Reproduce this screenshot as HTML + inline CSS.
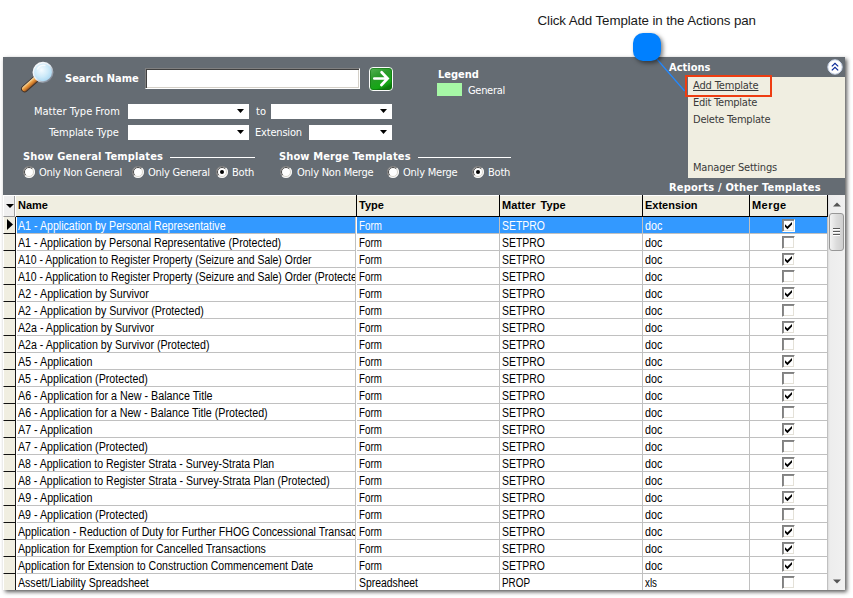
<!DOCTYPE html>
<html><head><meta charset="utf-8"><title>Templates</title>
<style>
html,body{margin:0;padding:0;background:#fff;}
body{width:853px;height:598px;position:relative;overflow:hidden;font-family:"DejaVu Sans Condensed","DejaVu Sans","Liberation Sans",sans-serif;font-size:11px;}
.abs,.abs *{position:absolute;}
#cap{position:absolute;left:537.5px;top:13px;font:13.33px/16px "Liberation Sans",sans-serif;color:#1a1a1a;white-space:nowrap;letter-spacing:-0.1px;}
#win{position:absolute;left:3px;top:57px;width:842px;height:533px;background:#656c73;box-shadow:2px 2px 4px rgba(0,0,0,.65);}
#blue{position:absolute;left:633px;top:33px;width:28px;height:28px;border-radius:10px;background:#0080ff;box-shadow:2px 2px 4px rgba(0,0,0,.5);}
.t{position:absolute;white-space:nowrap;color:#fff;line-height:13px;}
.b{font-weight:bold;}
.inp{position:absolute;background:#fff;}
.cmb{position:absolute;background:#fff;height:15px;}
.cmb:after{content:"";position:absolute;right:5px;top:5px;width:7px;height:4px;background:#000;clip-path:polygon(0 0,100% 0,50% 100%);}
.rad{position:absolute;width:12px;height:12px;}
.ln{position:absolute;height:1px;background:#fff;}
#act{position:absolute;left:685px;top:20px;width:157px;height:101px;background:#f0eee1;}
#act .t{color:#3a3a3a;}
#red{position:absolute;left:682px;top:18px;width:83px;height:18px;border:2px solid #ee3d12;}
#grid{position:absolute;left:0;top:138px;width:842px;height:395px;background:#fff;overflow:hidden;font:12px "Liberation Sans",sans-serif;}
#hdr{position:absolute;left:0;top:0;width:825px;height:21px;background:#f0eee1;border-bottom:1px solid #000;box-shadow:inset 0 1px 0 #fff;}
#hdr span{position:absolute;top:0;height:21px;line-height:20px;font-size:11px;font-weight:bold;color:#000;border-right:1px solid #000;box-sizing:border-box;padding-left:2px;}
.r{position:absolute;left:0;width:825px;height:17px;}
.r .ind{position:absolute;left:0;top:0;width:11px;height:16px;background:#f0eee1;border-left:1px solid #fff;border-right:1px solid #1a1a1a;border-bottom:1px solid #111;}
.r .c{position:absolute;top:0;height:16px;line-height:18px;border-right:1px solid #c0c0c0;border-bottom:1px solid #c0c0c0;overflow:hidden;white-space:nowrap;color:#000;padding-left:2px;box-sizing:content-box;}
.c .x{display:inline-block;transform-origin:0 50%;white-space:nowrap;}
.c1{left:14px;width:337px;padding-left:1px !important;}
.c2{left:354px;width:140px;}
.c3{left:497px;width:140px;}
.c4{left:640px;width:104px;}
.c5{left:747px;width:75px;}
.r.sel .c{background:#3399ff;color:#fff;}
.cb{position:absolute;left:32px;top:2px;width:11px;height:11px;background:#fff;border:1px solid;border-color:#808080 #fff #fff #808080;box-shadow:inset 1px 1px 0 #8a8a8a,inset -1px -1px 0 #e4e1d8;}
.cb svg{position:absolute;left:1px;top:1px;}
.cur{position:absolute;left:3px;top:2px;}
#sb{position:absolute;left:825px;top:0;width:17px;height:395px;background:linear-gradient(90deg,#dcdcdc 0,#ededed 2px,#f1f1f1);}
#thumb{position:absolute;left:1px;top:18px;width:15px;height:38px;border:1px solid #979797;border-radius:3px;background:linear-gradient(90deg,#f3f3f3,#dcdcdc 50%,#cfcfcf);box-sizing:border-box;}
</style></head><body>
<div id="cap">Click Add Template in the Actions pan</div>
<div id="win">
 <svg style="position:absolute;left:16px;top:2px" width="40" height="40" viewBox="0 0 40 40">
  <defs><radialGradient id="lg" cx="42%" cy="38%" r="65%"><stop offset="0" stop-color="#f4fbff"/><stop offset=".55" stop-color="#cdeaf9"/><stop offset="1" stop-color="#a6d6f2"/></radialGradient>
  <linearGradient id="hg" gradientUnits="userSpaceOnUse" x1="9.6" y1="22.7" x2="13.2" y2="26.9"><stop offset="0" stop-color="#f5e1b5"/><stop offset=".35" stop-color="#eea245"/><stop offset=".7" stop-color="#cf7a2a"/><stop offset="1" stop-color="#7c4a26"/></linearGradient>
  <linearGradient id="rg" x1="0" y1="0" x2="1" y2="1"><stop offset="0" stop-color="#ffffff"/><stop offset=".5" stop-color="#e4edf5"/><stop offset="1" stop-color="#5b6272"/></linearGradient></defs>
  <path d="M17.5 19.3 L5.6 29.8" stroke="#3d2f26" stroke-width="7" stroke-linecap="round"/>
  <path d="M17.5 19.3 L5.7 29.7" stroke="url(#hg)" stroke-width="5.4" stroke-linecap="round"/>
  <circle cx="24" cy="13.3" r="9.7" fill="url(#lg)" stroke="url(#rg)" stroke-width="1.6"/>
  <path d="M18.3 10.5 A7 7 0 0 1 26.5 6.6" stroke="#fff" stroke-width="1.6" fill="none" opacity=".75"/>
 </svg>
 <div class="t b" style="left:62px;top:15px;font-size:11px">Search Name</div>
 <div class="inp" style="left:142px;top:11px;width:213px;height:19px;border:1px solid;border-color:#808080 #fff #fff #808080;box-shadow:inset 1px 1px 0 #404040,inset -1px -1px 0 #d4d0c8"></div>
 <svg style="position:absolute;left:366px;top:10px" width="24" height="24" viewBox="0 0 24 24">
  <defs><linearGradient id="gg" x1="0" y1="0" x2="0.5" y2="1"><stop offset="0" stop-color="#58b558"/><stop offset=".45" stop-color="#2a9a2a"/><stop offset=".85" stop-color="#14a814"/><stop offset="1" stop-color="#0a7a0a"/></linearGradient></defs>
  <rect x=".5" y=".5" width="23" height="23" rx="3.5" fill="url(#gg)" stroke="#fbfbfb"/>
  <rect x="1.5" y="1.5" width="21" height="21" rx="2.5" fill="none" stroke="#0b6b0b" stroke-opacity=".55"/>
  <path d="M5.3 11.5 H17.6 M12.6 5.2 L18.6 11.5 L12.4 18" fill="none" stroke="#fff" stroke-width="2.7" stroke-linecap="round" stroke-linejoin="miter"/>
 </svg>
 <div class="t" style="left:31px;top:48px">Matter Type From</div>
 <div class="cmb" style="left:125px;top:47px;width:121px"></div>
 <div class="t" style="left:253px;top:48px">to</div>
 <div class="cmb" style="left:268px;top:47px;width:121px"></div>
 <div class="t" style="left:46px;top:69px;letter-spacing:-0.07px">Template Type</div>
 <div class="cmb" style="left:125px;top:68px;width:121px"></div>
 <div class="t" style="left:252px;top:69px;letter-spacing:-0.19px">Extension</div>
 <div class="cmb" style="left:306px;top:68px;width:83px"></div>

 <div class="t b" style="left:435px;top:11px">Legend</div>
 <div style="position:absolute;left:434px;top:26px;width:25px;height:13px;background:#a6f7a6"></div>
 <div class="t" style="left:465px;top:27px;letter-spacing:-0.31px">General</div>

 <div class="t b" style="left:20px;top:93px;letter-spacing:0.12px">Show General Templates</div>
 <div class="ln" style="left:167px;top:100px;width:85px"></div>
 <svg class="rad" style="left:20px;top:109px" width="12" height="12" viewBox="0 0 12 12"><circle cx="6" cy="6" r="5.6" fill="#fff"/><path d="M2.1 9.9 A5.5 5.5 0 0 1 9.9 2.1" fill="none" stroke="#808080" stroke-width="1.1"/><path d="M9.9 2.1 A5.5 5.5 0 0 1 2.1 9.9" fill="none" stroke="#f4f4f4" stroke-width="1.1"/><path d="M2.8 9.2 A4.5 4.5 0 0 1 9.2 2.8" fill="none" stroke="#4c4c4c" stroke-width="1"/><path d="M9.2 2.8 A4.5 4.5 0 0 1 2.8 9.2" fill="none" stroke="#d8d5cc" stroke-width="1"/></svg><div class="t" style="left:36px;top:109px;letter-spacing:-0.29px">Only Non General</div>
 <svg class="rad" style="left:129px;top:109px" width="12" height="12" viewBox="0 0 12 12"><circle cx="6" cy="6" r="5.6" fill="#fff"/><path d="M2.1 9.9 A5.5 5.5 0 0 1 9.9 2.1" fill="none" stroke="#808080" stroke-width="1.1"/><path d="M9.9 2.1 A5.5 5.5 0 0 1 2.1 9.9" fill="none" stroke="#f4f4f4" stroke-width="1.1"/><path d="M2.8 9.2 A4.5 4.5 0 0 1 9.2 2.8" fill="none" stroke="#4c4c4c" stroke-width="1"/><path d="M9.2 2.8 A4.5 4.5 0 0 1 2.8 9.2" fill="none" stroke="#d8d5cc" stroke-width="1"/></svg><div class="t" style="left:145px;top:109px;letter-spacing:-0.26px">Only General</div>
 <svg class="rad" style="left:213px;top:109px" width="12" height="12" viewBox="0 0 12 12"><circle cx="6" cy="6" r="5.6" fill="#fff"/><path d="M2.1 9.9 A5.5 5.5 0 0 1 9.9 2.1" fill="none" stroke="#808080" stroke-width="1.1"/><path d="M9.9 2.1 A5.5 5.5 0 0 1 2.1 9.9" fill="none" stroke="#f4f4f4" stroke-width="1.1"/><path d="M2.8 9.2 A4.5 4.5 0 0 1 9.2 2.8" fill="none" stroke="#4c4c4c" stroke-width="1"/><path d="M9.2 2.8 A4.5 4.5 0 0 1 2.8 9.2" fill="none" stroke="#d8d5cc" stroke-width="1"/><circle cx="6" cy="6" r="2" fill="#000"/></svg><div class="t" style="left:229px;top:109px;letter-spacing:-0.22px">Both</div>

 <div class="t b" style="left:276px;top:93px;letter-spacing:0.13px">Show Merge Templates</div>
 <div class="ln" style="left:415px;top:100px;width:93px"></div>
 <svg class="rad" style="left:277px;top:109px" width="12" height="12" viewBox="0 0 12 12"><circle cx="6" cy="6" r="5.6" fill="#fff"/><path d="M2.1 9.9 A5.5 5.5 0 0 1 9.9 2.1" fill="none" stroke="#808080" stroke-width="1.1"/><path d="M9.9 2.1 A5.5 5.5 0 0 1 2.1 9.9" fill="none" stroke="#f4f4f4" stroke-width="1.1"/><path d="M2.8 9.2 A4.5 4.5 0 0 1 9.2 2.8" fill="none" stroke="#4c4c4c" stroke-width="1"/><path d="M9.2 2.8 A4.5 4.5 0 0 1 2.8 9.2" fill="none" stroke="#d8d5cc" stroke-width="1"/></svg><div class="t" style="left:294px;top:109px;letter-spacing:-0.225px">Only Non Merge</div>
 <svg class="rad" style="left:384px;top:109px" width="12" height="12" viewBox="0 0 12 12"><circle cx="6" cy="6" r="5.6" fill="#fff"/><path d="M2.1 9.9 A5.5 5.5 0 0 1 9.9 2.1" fill="none" stroke="#808080" stroke-width="1.1"/><path d="M9.9 2.1 A5.5 5.5 0 0 1 2.1 9.9" fill="none" stroke="#f4f4f4" stroke-width="1.1"/><path d="M2.8 9.2 A4.5 4.5 0 0 1 9.2 2.8" fill="none" stroke="#4c4c4c" stroke-width="1"/><path d="M9.2 2.8 A4.5 4.5 0 0 1 2.8 9.2" fill="none" stroke="#d8d5cc" stroke-width="1"/></svg><div class="t" style="left:400px;top:109px;letter-spacing:-0.22px">Only Merge</div>
 <svg class="rad" style="left:469px;top:109px" width="12" height="12" viewBox="0 0 12 12"><circle cx="6" cy="6" r="5.6" fill="#fff"/><path d="M2.1 9.9 A5.5 5.5 0 0 1 9.9 2.1" fill="none" stroke="#808080" stroke-width="1.1"/><path d="M9.9 2.1 A5.5 5.5 0 0 1 2.1 9.9" fill="none" stroke="#f4f4f4" stroke-width="1.1"/><path d="M2.8 9.2 A4.5 4.5 0 0 1 9.2 2.8" fill="none" stroke="#4c4c4c" stroke-width="1"/><path d="M9.2 2.8 A4.5 4.5 0 0 1 2.8 9.2" fill="none" stroke="#d8d5cc" stroke-width="1"/><circle cx="6" cy="6" r="2" fill="#000"/></svg><div class="t" style="left:485px;top:109px;letter-spacing:-0.22px">Both</div>

 <div class="t b" style="left:666px;top:4px">Actions</div>
 <svg style="position:absolute;left:824px;top:2px" width="16" height="16" viewBox="0 0 16 16"><circle cx="8" cy="8" r="7.2" fill="#fff" stroke="#c8d4ea" stroke-width="1"/><path d="M4.8 7.4 L8 4.3 L11.2 7.4 M4.8 11.4 L8 8.3 L11.2 11.4" fill="none" stroke="#0a2a9a" stroke-width="1.25"/></svg>
 <div id="act">
  <div class="t" style="left:5px;top:2px;text-decoration:underline;letter-spacing:-0.15px">Add Template</div>
  <div class="t" style="left:5px;top:19px;letter-spacing:-0.24px">Edit Template</div>
  <div class="t" style="left:5px;top:36px;letter-spacing:-0.22px">Delete Template</div>
  <div class="t" style="left:5px;top:84px;letter-spacing:-0.2px">Manager Settings</div>
 </div>
 <div id="red"></div>
 <div class="t b" style="left:666px;top:124px;letter-spacing:0.22px">Reports / Other Templates</div>

 <div id="grid">
  <div id="hdr">
   <span style="left:0;width:13px;height:22px;background:#efefef;border:1px solid;border-color:#fff #fff #9a9a9a #fff;box-shadow:inset -1px 0 0 #a0a0a0;padding:0;z-index:2"><svg style="position:absolute;left:2px;top:8px" width="8" height="4" viewBox="0 0 8 4"><path d="M0 0 H8 L4 4 Z" fill="#000"/></svg></span>
   <span style="left:13px;width:341px">Name</span>
   <span style="left:354px;width:143px">Type</span>
   <span style="left:497px;width:143px;word-spacing:1.6px;letter-spacing:.12px">Matter Type</span>
   <span style="left:640px;width:107px">Extension</span>
   <span style="left:747px;width:78px;letter-spacing:.44px">Merge</span>
  </div>
<div class="r sel" style="top:22px"><i class="ind"><svg class="cur" width="6" height="11" viewBox="0 0 6 11"><path d="M0 0 L6 5.5 L0 11 Z" fill="#000"/></svg></i><span class="c c1"><span class="x" style="transform:scaleX(0.8866)">A1 - Application by Personal Representative</span></span><span class="c c2"><span class="x" style="transform:scaleX(0.8143)">Form</span></span><span class="c c3"><span class="x" style="transform:scaleX(0.8674)">SETPRO</span></span><span class="c c4"><span class="x" style="transform:scaleX(0.8988)">doc</span></span><span class="c c5"><b class="cb"><svg width="9" height="9" viewBox="0 0 9 9"><path d="M1 3.2 L3.4 5.6 L8 1 L8 3.6 L3.4 8.2 L1 5.8 Z" fill="#000"/></svg></b></span></div>
<div class="r" style="top:39px"><i class="ind"></i><span class="c c1"><span class="x" style="transform:scaleX(0.8864)">A1 - Application by Personal Representative (Protected)</span></span><span class="c c2"><span class="x" style="transform:scaleX(0.8143)">Form</span></span><span class="c c3"><span class="x" style="transform:scaleX(0.8674)">SETPRO</span></span><span class="c c4"><span class="x" style="transform:scaleX(0.8988)">doc</span></span><span class="c c5"><b class="cb"></b></span></div>
<div class="r" style="top:56px"><i class="ind"></i><span class="c c1"><span class="x" style="transform:scaleX(0.8713)">A10 - Application to Register Property (Seizure and Sale) Order</span></span><span class="c c2"><span class="x" style="transform:scaleX(0.8143)">Form</span></span><span class="c c3"><span class="x" style="transform:scaleX(0.8674)">SETPRO</span></span><span class="c c4"><span class="x" style="transform:scaleX(0.8988)">doc</span></span><span class="c c5"><b class="cb"><svg width="9" height="9" viewBox="0 0 9 9"><path d="M1 3.2 L3.4 5.6 L8 1 L8 3.6 L3.4 8.2 L1 5.8 Z" fill="#000"/></svg></b></span></div>
<div class="r" style="top:73px"><i class="ind"></i><span class="c c1"><span class="x" style="transform:scaleX(0.8713)">A10 - Application to Register Property (Seizure and Sale) Order (Protected)</span></span><span class="c c2"><span class="x" style="transform:scaleX(0.8143)">Form</span></span><span class="c c3"><span class="x" style="transform:scaleX(0.8674)">SETPRO</span></span><span class="c c4"><span class="x" style="transform:scaleX(0.8988)">doc</span></span><span class="c c5"><b class="cb"></b></span></div>
<div class="r" style="top:90px"><i class="ind"></i><span class="c c1"><span class="x" style="transform:scaleX(0.8913)">A2 - Application by Survivor</span></span><span class="c c2"><span class="x" style="transform:scaleX(0.8143)">Form</span></span><span class="c c3"><span class="x" style="transform:scaleX(0.8674)">SETPRO</span></span><span class="c c4"><span class="x" style="transform:scaleX(0.8988)">doc</span></span><span class="c c5"><b class="cb"><svg width="9" height="9" viewBox="0 0 9 9"><path d="M1 3.2 L3.4 5.6 L8 1 L8 3.6 L3.4 8.2 L1 5.8 Z" fill="#000"/></svg></b></span></div>
<div class="r" style="top:107px"><i class="ind"></i><span class="c c1"><span class="x" style="transform:scaleX(0.8876)">A2 - Application by Survivor (Protected)</span></span><span class="c c2"><span class="x" style="transform:scaleX(0.8143)">Form</span></span><span class="c c3"><span class="x" style="transform:scaleX(0.8674)">SETPRO</span></span><span class="c c4"><span class="x" style="transform:scaleX(0.8988)">doc</span></span><span class="c c5"><b class="cb"></b></span></div>
<div class="r" style="top:124px"><i class="ind"></i><span class="c c1"><span class="x" style="transform:scaleX(0.8864)">A2a - Application by Survivor</span></span><span class="c c2"><span class="x" style="transform:scaleX(0.8143)">Form</span></span><span class="c c3"><span class="x" style="transform:scaleX(0.8674)">SETPRO</span></span><span class="c c4"><span class="x" style="transform:scaleX(0.8988)">doc</span></span><span class="c c5"><b class="cb"><svg width="9" height="9" viewBox="0 0 9 9"><path d="M1 3.2 L3.4 5.6 L8 1 L8 3.6 L3.4 8.2 L1 5.8 Z" fill="#000"/></svg></b></span></div>
<div class="r" style="top:141px"><i class="ind"></i><span class="c c1"><span class="x" style="transform:scaleX(0.8861)">A2a - Application by Survivor (Protected)</span></span><span class="c c2"><span class="x" style="transform:scaleX(0.8143)">Form</span></span><span class="c c3"><span class="x" style="transform:scaleX(0.8674)">SETPRO</span></span><span class="c c4"><span class="x" style="transform:scaleX(0.8988)">doc</span></span><span class="c c5"><b class="cb"></b></span></div>
<div class="r" style="top:158px"><i class="ind"></i><span class="c c1"><span class="x" style="transform:scaleX(0.8922)">A5 - Application</span></span><span class="c c2"><span class="x" style="transform:scaleX(0.8143)">Form</span></span><span class="c c3"><span class="x" style="transform:scaleX(0.8674)">SETPRO</span></span><span class="c c4"><span class="x" style="transform:scaleX(0.8988)">doc</span></span><span class="c c5"><b class="cb"><svg width="9" height="9" viewBox="0 0 9 9"><path d="M1 3.2 L3.4 5.6 L8 1 L8 3.6 L3.4 8.2 L1 5.8 Z" fill="#000"/></svg></b></span></div>
<div class="r" style="top:175px"><i class="ind"></i><span class="c c1"><span class="x" style="transform:scaleX(0.8893)">A5 - Application (Protected)</span></span><span class="c c2"><span class="x" style="transform:scaleX(0.8143)">Form</span></span><span class="c c3"><span class="x" style="transform:scaleX(0.8674)">SETPRO</span></span><span class="c c4"><span class="x" style="transform:scaleX(0.8988)">doc</span></span><span class="c c5"><b class="cb"></b></span></div>
<div class="r" style="top:192px"><i class="ind"></i><span class="c c1"><span class="x" style="transform:scaleX(0.8949)">A6 - Application for a New - Balance Title</span></span><span class="c c2"><span class="x" style="transform:scaleX(0.8143)">Form</span></span><span class="c c3"><span class="x" style="transform:scaleX(0.8674)">SETPRO</span></span><span class="c c4"><span class="x" style="transform:scaleX(0.8988)">doc</span></span><span class="c c5"><b class="cb"><svg width="9" height="9" viewBox="0 0 9 9"><path d="M1 3.2 L3.4 5.6 L8 1 L8 3.6 L3.4 8.2 L1 5.8 Z" fill="#000"/></svg></b></span></div>
<div class="r" style="top:209px"><i class="ind"></i><span class="c c1"><span class="x" style="transform:scaleX(0.8913)">A6 - Application for a New - Balance Title (Protected)</span></span><span class="c c2"><span class="x" style="transform:scaleX(0.8143)">Form</span></span><span class="c c3"><span class="x" style="transform:scaleX(0.8674)">SETPRO</span></span><span class="c c4"><span class="x" style="transform:scaleX(0.8988)">doc</span></span><span class="c c5"><b class="cb"></b></span></div>
<div class="r" style="top:226px"><i class="ind"></i><span class="c c1"><span class="x" style="transform:scaleX(0.8922)">A7 - Application</span></span><span class="c c2"><span class="x" style="transform:scaleX(0.8143)">Form</span></span><span class="c c3"><span class="x" style="transform:scaleX(0.8674)">SETPRO</span></span><span class="c c4"><span class="x" style="transform:scaleX(0.8988)">doc</span></span><span class="c c5"><b class="cb"><svg width="9" height="9" viewBox="0 0 9 9"><path d="M1 3.2 L3.4 5.6 L8 1 L8 3.6 L3.4 8.2 L1 5.8 Z" fill="#000"/></svg></b></span></div>
<div class="r" style="top:243px"><i class="ind"></i><span class="c c1"><span class="x" style="transform:scaleX(0.8893)">A7 - Application (Protected)</span></span><span class="c c2"><span class="x" style="transform:scaleX(0.8143)">Form</span></span><span class="c c3"><span class="x" style="transform:scaleX(0.8674)">SETPRO</span></span><span class="c c4"><span class="x" style="transform:scaleX(0.8988)">doc</span></span><span class="c c5"><b class="cb"></b></span></div>
<div class="r" style="top:260px"><i class="ind"></i><span class="c c1"><span class="x" style="transform:scaleX(0.8790)">A8 - Application to Register Strata - Survey-Strata Plan</span></span><span class="c c2"><span class="x" style="transform:scaleX(0.8143)">Form</span></span><span class="c c3"><span class="x" style="transform:scaleX(0.8674)">SETPRO</span></span><span class="c c4"><span class="x" style="transform:scaleX(0.8988)">doc</span></span><span class="c c5"><b class="cb"><svg width="9" height="9" viewBox="0 0 9 9"><path d="M1 3.2 L3.4 5.6 L8 1 L8 3.6 L3.4 8.2 L1 5.8 Z" fill="#000"/></svg></b></span></div>
<div class="r" style="top:277px"><i class="ind"></i><span class="c c1"><span class="x" style="transform:scaleX(0.8801)">A8 - Application to Register Strata - Survey-Strata Plan (Protected)</span></span><span class="c c2"><span class="x" style="transform:scaleX(0.8143)">Form</span></span><span class="c c3"><span class="x" style="transform:scaleX(0.8674)">SETPRO</span></span><span class="c c4"><span class="x" style="transform:scaleX(0.8988)">doc</span></span><span class="c c5"><b class="cb"></b></span></div>
<div class="r" style="top:294px"><i class="ind"></i><span class="c c1"><span class="x" style="transform:scaleX(0.8922)">A9 - Application</span></span><span class="c c2"><span class="x" style="transform:scaleX(0.8143)">Form</span></span><span class="c c3"><span class="x" style="transform:scaleX(0.8674)">SETPRO</span></span><span class="c c4"><span class="x" style="transform:scaleX(0.8988)">doc</span></span><span class="c c5"><b class="cb"><svg width="9" height="9" viewBox="0 0 9 9"><path d="M1 3.2 L3.4 5.6 L8 1 L8 3.6 L3.4 8.2 L1 5.8 Z" fill="#000"/></svg></b></span></div>
<div class="r" style="top:311px"><i class="ind"></i><span class="c c1"><span class="x" style="transform:scaleX(0.8893)">A9 - Application (Protected)</span></span><span class="c c2"><span class="x" style="transform:scaleX(0.8143)">Form</span></span><span class="c c3"><span class="x" style="transform:scaleX(0.8674)">SETPRO</span></span><span class="c c4"><span class="x" style="transform:scaleX(0.8988)">doc</span></span><span class="c c5"><b class="cb"></b></span></div>
<div class="r" style="top:328px"><i class="ind"></i><span class="c c1"><span class="x" style="transform:scaleX(0.8829)">Application - Reduction of Duty for Further FHOG Concessional Transaction</span></span><span class="c c2"><span class="x" style="transform:scaleX(0.8143)">Form</span></span><span class="c c3"><span class="x" style="transform:scaleX(0.8674)">SETPRO</span></span><span class="c c4"><span class="x" style="transform:scaleX(0.8988)">doc</span></span><span class="c c5"><b class="cb"><svg width="9" height="9" viewBox="0 0 9 9"><path d="M1 3.2 L3.4 5.6 L8 1 L8 3.6 L3.4 8.2 L1 5.8 Z" fill="#000"/></svg></b></span></div>
<div class="r" style="top:345px"><i class="ind"></i><span class="c c1"><span class="x" style="transform:scaleX(0.8807)">Application for Exemption for Cancelled Transactions</span></span><span class="c c2"><span class="x" style="transform:scaleX(0.8143)">Form</span></span><span class="c c3"><span class="x" style="transform:scaleX(0.8674)">SETPRO</span></span><span class="c c4"><span class="x" style="transform:scaleX(0.8988)">doc</span></span><span class="c c5"><b class="cb"><svg width="9" height="9" viewBox="0 0 9 9"><path d="M1 3.2 L3.4 5.6 L8 1 L8 3.6 L3.4 8.2 L1 5.8 Z" fill="#000"/></svg></b></span></div>
<div class="r" style="top:362px"><i class="ind"></i><span class="c c1"><span class="x" style="transform:scaleX(0.8781)">Application for Extension to Construction Commencement Date</span></span><span class="c c2"><span class="x" style="transform:scaleX(0.8143)">Form</span></span><span class="c c3"><span class="x" style="transform:scaleX(0.8674)">SETPRO</span></span><span class="c c4"><span class="x" style="transform:scaleX(0.8988)">doc</span></span><span class="c c5"><b class="cb"><svg width="9" height="9" viewBox="0 0 9 9"><path d="M1 3.2 L3.4 5.6 L8 1 L8 3.6 L3.4 8.2 L1 5.8 Z" fill="#000"/></svg></b></span></div>
<div class="r" style="top:379px"><i class="ind"></i><span class="c c1"><span class="x" style="transform:scaleX(0.8832)">Assett/Liability Spreadsheet</span></span><span class="c c2"><span class="x" style="transform:scaleX(0.8669)">Spreadsheet</span></span><span class="c c3"><span class="x" style="transform:scaleX(0.8232)">PROP</span></span><span class="c c4"><span class="x" style="transform:scaleX(0.8179)">xls</span></span><span class="c c5"><b class="cb"></b></span></div>  <div id="sb">
   <svg style="position:absolute;left:5px;top:7px" width="8" height="5" viewBox="0 0 8 5"><path d="M0 4.5 L4 0.5 L8 4.5 Z" fill="#555"/></svg>
   <div id="thumb"><svg style="position:absolute;left:3px;top:14px" width="8" height="9" viewBox="0 0 8 9"><path d="M0 0.5 H7 M0 3.5 H7 M0 6.5 H7" stroke="#5a5a5a" stroke-width="1"/><path d="M0 1.5 H7 M0 4.5 H7 M0 7.5 H7" stroke="#fff" stroke-width="1"/></svg></div>
   <svg style="position:absolute;left:5px;top:384px" width="8" height="5" viewBox="0 0 8 5"><path d="M0 0.5 L4 4.5 L8 0.5 Z" fill="#555"/></svg>
  </div>
 </div>
</div>
<svg style="position:absolute;left:0;top:0;pointer-events:none" width="853" height="598"><line x1="655.5" y1="57.5" x2="684.6" y2="91" stroke="#2288ff" stroke-width="1.2"/></svg>
<div id="blue"></div>
</body></html>
